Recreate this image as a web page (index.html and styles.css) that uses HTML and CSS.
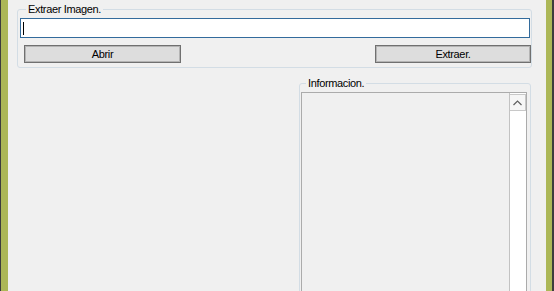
FILE: index.html
```html
<!DOCTYPE html>
<html lang="es">
<head>
<meta charset="utf-8">
<title>Extraer Imagen</title>
<link rel="stylesheet" href="styles.css">
</head>
<body>
<div class="window">
  <div class="edge-left"></div>
  <div class="client">
    <fieldset class="group group-extract">
      <legend class="group-title">Extraer Imagen.</legend>
      <div class="textbox"><span class="caret"></span></div>
      <div class="button-row">
        <button class="btn btn-open" type="button">Abrir</button>
        <button class="btn btn-extract" type="button">Extraer.</button>
      </div>
    </fieldset>
    <fieldset class="group group-info">
      <legend class="group-title">Informacion.</legend>
      <div class="info-box">
        <div class="info-text"></div>
        <div class="scrollbar">
          <div class="scroll-up">
            <svg width="9" height="6" viewBox="0 0 9 6"><polyline points="0.5,5 4.5,1 8.5,5" fill="none" stroke="#606060" stroke-width="1.2"/></svg>
          </div>
        </div>
      </div>
    </fieldset>
  </div>
  <div class="edge-right"></div>
</div>
</body>
</html>
```

FILE: styles.css
```css
html, body {
  margin: 0;
  padding: 0;
  background: #f0f0f0;
  overflow: hidden;
}

.window {
  display: flex;
  width: 554px;
  height: 291px;
  overflow: hidden;
  font-family: "Liberation Sans", Arial, sans-serif;
  font-size: 11px;
  letter-spacing: -0.35px;
  color: #000;
}

.edge-left {
  width: 7px;
  flex: none;
  background: #acb757;
  border-left: 1px solid #3d3d3d;
}

.edge-right {
  width: 6px;
  flex: none;
  background: #acb757;
  border-right: 2px solid #3d3d3d;
}

.client {
  flex: 1;
  display: flex;
  flex-direction: column;
  padding: 3px 14px 0 9px;
  min-width: 0;
}

.group {
  margin: 0;
  border: 1px solid #d3dde5;
  border-radius: 3px;
  min-width: 0;
}

.group-title {
  padding: 0 2px;
  margin-left: 6px;
  line-height: 12px;
  font-size: 11px;
}

.group-extract {
  padding: 0 1px 4px 2px;
}

.textbox {
  margin-top: 3px;
  height: 18px;
  border: 1px solid #336b9c;
  background: #fff;
  display: flex;
  align-items: center;
  padding-left: 2px;
}

.caret {
  width: 1px;
  height: 13px;
  background: #000;
}

.button-row {
  display: flex;
  justify-content: space-between;
  margin-top: 7px;
  padding-left: 4px;
  margin-right: -1px;
}

.btn {
  height: 18px;
  margin: 0;
  padding: 0;
  border: 1px solid #707070;
  box-shadow: inset 0 0 0 1px #b4b4b4;
  background: #dddddd;
  font-family: "Liberation Sans", Arial, sans-serif;
  font-size: 11px;
  letter-spacing: -0.35px;
  line-height: 14px;
  color: #000;
}

.btn-open {
  width: 157px;
}

.btn-extract {
  width: 156px;
}

.group-info {
  align-self: flex-end;
  width: 232px;
  box-sizing: border-box;
  margin-top: 9px;
  margin-right: 1px;
  padding: 0 3px 0 1px;
}

.group-info .group-title {
  margin-left: 5px;
}

.info-box {
  margin-top: 3px;
  height: 220px;
  border: 1px solid #ababab;
  background: #f0f0f0;
  display: flex;
}

.info-text {
  flex: 1;
}

.scrollbar {
  width: 16px;
  background: #fff;
  border-left: 1px solid #c2c2c2;
  padding-top: 1px;
}

.scroll-up {
  height: 15px;
  border: 1px solid #c8c8c8;
  border-left: none;
  display: flex;
  align-items: center;
  justify-content: center;
  background: #f6f6f6;
}

.scroll-up svg {
  display: block;
}
```
